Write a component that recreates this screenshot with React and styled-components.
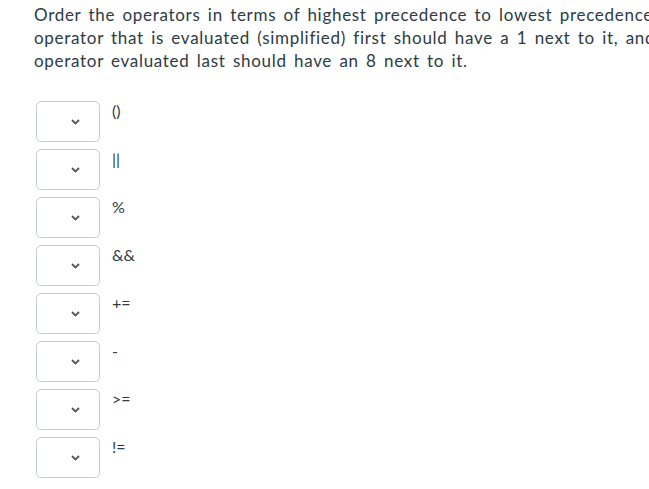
import React from 'react'
import styled, { createGlobalStyle } from 'styled-components'

const GlobalStyle = createGlobalStyle`
  html, body {
    margin: 0;
    padding: 0;
    background: #fff;
    overflow: hidden;
  }
  body {
    font-family: Lato, 'Open Sans', sans-serif;
    color: #2d3b45;
  }
`

const Page = styled.div`
  padding: 3px 0 0 34px;
  width: 900px;
`

const Prompt = styled.p`
  margin: 0;
  font-size: 17px;
  line-height: 23px;
  letter-spacing: 0.7px;
  word-spacing: 2.3px;
  white-space: nowrap;
`

const MatchList = styled.div`
  display: flex;
  flex-direction: column;
  gap: 7px;
  margin-top: 29px;
  padding-left: 2px;
`

const MatchRow = styled.div`
  display: flex;
  align-items: flex-start;
  gap: 12px;
`

const SelectBox = styled.div`
  box-sizing: border-box;
  width: 64px;
  height: 41px;
  border: 1px solid #c7cdd1;
  border-radius: 5px;
  background: #fff;
  display: flex;
  align-items: center;
  justify-content: flex-end;
  padding-right: 19px;
  color: #555;
`

const Operator = styled.span`
  font-size: 16px;
  line-height: 20px;
  color: #2d3b45;
`

const Chevron = () => (
  <svg width="9" height="6" viewBox="0 0 9 6" fill="none">
    <path d="M1 1l3.5 3.5L8 1" stroke="currentColor" strokeWidth="1.8" />
  </svg>
)

const operators = ['()', '||', '%', '&&', '+=', '-', '>=', '!=']

export default function App() {
  return (
    <>
      <GlobalStyle />
      <Page>
        <Prompt>
          Order the operators in terms of highest precedence to lowest precedence. The
          <br />
          operator that is evaluated (simplified) first should have a 1 next to it, and the
          <br />
          operator evaluated last should have an 8 next to it.
        </Prompt>
        <MatchList>
          {operators.map((op) => (
            <MatchRow key={op}>
              <SelectBox>
                <Chevron />
              </SelectBox>
              <Operator>{op}</Operator>
            </MatchRow>
          ))}
        </MatchList>
      </Page>
    </>
  )
}
